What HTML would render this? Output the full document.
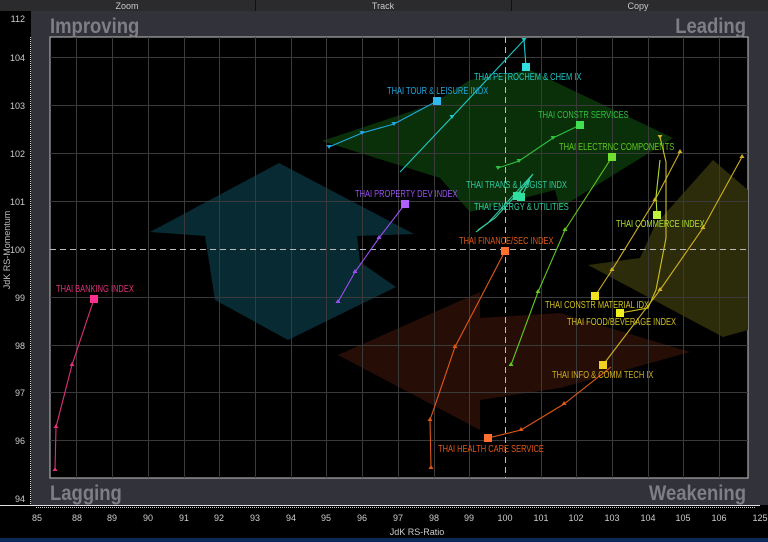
<!DOCTYPE html>
<html><head><meta charset="utf-8"><style>
html,body{margin:0;padding:0;background:#000;}
svg{display:block}
text{font-family:"Liberation Sans",sans-serif;}
</style></head><body>
<svg width="768" height="542" viewBox="0 0 768 542" xmlns="http://www.w3.org/2000/svg">
<rect width="768" height="542" fill="#000"/>
<rect x="0" y="0" width="768" height="11" fill="#2b2b2d"/>
<line x1="255.5" y1="0" x2="255.5" y2="11" stroke="#111"/>
<line x1="511.5" y1="0" x2="511.5" y2="11" stroke="#111"/>
<g fill="#c8c8c8" font-size="9" text-anchor="middle">
<text x="127" y="9">Zoom</text><text x="383" y="9">Track</text><text x="638" y="9">Copy</text>
</g>
<rect x="31" y="11" width="737" height="494" fill="#32323a"/>
<rect x="50" y="37" width="698" height="441" fill="#000" stroke="#aaa" stroke-width="1.2"/>
<g font-size="21" font-weight="bold" fill="#7e7e84">
<text transform="translate(50,33) scale(.88,1)">Improving</text>
<text transform="translate(746,33) scale(.88,1)" text-anchor="end">Leading</text>
<text transform="translate(50,500) scale(.88,1)">Lagging</text>
<text transform="translate(746,500) scale(.88,1)" text-anchor="end">Weakening</text>
</g>
<g>
<polygon points="150,232 279,163 414,234 357,236 360,262 396,287 288,340 215,300 205,236" fill="#0a3440" opacity="0.8"/>
<polygon points="322,141 430,105 470,80 530,70 673,138 560,208 555,190 470,212 440,178" fill="#0a350a" opacity="0.9"/>
<polygon points="588,265 640,258 655,225 713,160 748,190 748,330 723,337" fill="#2c2c0a"/>
<polygon points="338,355 480,292 480,318 560,313 690,352 560,388 480,400 480,430" fill="#260e06"/>
</g>
<g stroke="#3a3a3a" stroke-width="1">
<line x1="76.5" y1="37" x2="76.5" y2="478"/><line x1="112.5" y1="37" x2="112.5" y2="478"/><line x1="148.5" y1="37" x2="148.5" y2="478"/><line x1="184.5" y1="37" x2="184.5" y2="478"/><line x1="219.5" y1="37" x2="219.5" y2="478"/><line x1="255.5" y1="37" x2="255.5" y2="478"/><line x1="291.5" y1="37" x2="291.5" y2="478"/><line x1="326.5" y1="37" x2="326.5" y2="478"/><line x1="362.5" y1="37" x2="362.5" y2="478"/><line x1="398.5" y1="37" x2="398.5" y2="478"/><line x1="434.5" y1="37" x2="434.5" y2="478"/><line x1="469.5" y1="37" x2="469.5" y2="478"/><line x1="541.5" y1="37" x2="541.5" y2="478"/><line x1="576.5" y1="37" x2="576.5" y2="478"/><line x1="612.5" y1="37" x2="612.5" y2="478"/><line x1="648.5" y1="37" x2="648.5" y2="478"/><line x1="683.5" y1="37" x2="683.5" y2="478"/><line x1="719.5" y1="37" x2="719.5" y2="478"/>
<line x1="50" y1="57.5" x2="748" y2="57.5"/><line x1="50" y1="105.5" x2="748" y2="105.5"/><line x1="50" y1="153.5" x2="748" y2="153.5"/><line x1="50" y1="201.5" x2="748" y2="201.5"/><line x1="50" y1="297.5" x2="748" y2="297.5"/><line x1="50" y1="345.5" x2="748" y2="345.5"/><line x1="50" y1="392.5" x2="748" y2="392.5"/><line x1="50" y1="440.5" x2="748" y2="440.5"/>
</g>
<g stroke="#bbb" stroke-dasharray="6,4" stroke-width="1">
<line x1="505.5" y1="37" x2="505.5" y2="478"/>
<line x1="50" y1="249.5" x2="748" y2="249.5"/>
</g>
<g fill="none" stroke-width="1.1">
<polyline points="55,470 56,427 72,365 94,299" stroke="#e0307a"/>
<polyline points="338,302 355,272 379,238 405,204" stroke="#9a50f0"/>
<polyline points="329,147 362,133 394,124 437,101" stroke="#20a8e0"/>
<polyline points="400,172 452,117 524,40 526,67" stroke="#20c8c8"/>
<polyline points="498,168 519,161 553,138 580,125" stroke="#30c040"/>
<polyline points="511,365 538,292 565,230 612,157" stroke="#60c820"/>
<polyline points="476,232 488,223 533,174 517,196" stroke="#30c8a0"/>
<polyline points="478,230 495,218 530,180 521,197" stroke="#30d0a0"/>
<polyline points="431,468 430,420 455,347 505,251" stroke="#e05818"/>
<polyline points="488,438 521,430 564,404 611,367" stroke="#e05818"/>
<polyline points="603,365 660,290 703,228 742,157" stroke="#d0b020"/>
<polyline points="595,296 612,270 655,200 680,152" stroke="#d0b020"/>
<polyline points="620,313 648,308 656,290 666,238 666,162 660,137" stroke="#d0c020"/>
<polyline points="657,215 656,197 660,160" stroke="#b0e030"/>
</g>
<g>
<path d="M55,467l-2.5,4h5z M56,424l-2.5,4h5z M72,362l-2.5,4h5z" fill="#e0307a"/>
<path d="M338,299l-2.5,4h5z M355,269l-2.5,4h5z M379,235l-2.5,4h5z" fill="#9a50f0"/>
<path d="M329,149l-2.5,-4h5z M362,135l-2.5,-4h5z M394,126l-2.5,-4h5z" fill="#20a8e0"/>
<path d="M524,42l-2.5,-4h5z M452,119l-2.5,-4h5z" fill="#20c8c8"/>
<path d="M498,170l-2.5,-4h5z M519,163l-2.5,-4h5z M553,140l-2.5,-4h5z" fill="#30c040"/>
<path d="M511,362l-2.5,4h5z M538,289l-2.5,4h5z M565,227l-2.5,4h5z" fill="#60c820"/>
<path d="M431,465l-2.5,4h5z M430,417l-2.5,4h5z M455,344l-2.5,4h5z M521,427l-2.5,4h5z M564,401l-2.5,4h5z" fill="#e05818"/>
<path d="M660,287l-2.5,4h5z M703,225l-2.5,4h5z M742,154l-2.5,4h5z M612,267l-2.5,4h5z M655,197l-2.5,4h5z M680,149l-2.5,4h5z M660,139l-2.5,-4h5z" fill="#d0b020"/>
</g>
<g>
<rect x="90" y="295" width="8" height="8" fill="#ff3090"/>
<rect x="401" y="200" width="8" height="8" fill="#b060ff"/>
<rect x="433" y="97" width="8" height="8" fill="#30b8f0"/>
<rect x="522" y="63" width="8" height="8" fill="#30e0e0"/>
<rect x="576" y="121" width="8" height="8" fill="#40e050"/>
<rect x="608" y="153" width="8" height="8" fill="#70e030"/>
<rect x="513" y="192" width="8" height="8" fill="#30e0a0"/>
<rect x="517" y="193" width="8" height="8" fill="#30e0a0"/>
<rect x="501" y="247" width="8" height="8" fill="#ff7030"/>
<rect x="484" y="434" width="8" height="8" fill="#ff7030"/>
<rect x="599" y="361" width="8" height="8" fill="#f0d020"/>
<rect x="591" y="292" width="8" height="8" fill="#f0e020"/>
<rect x="616" y="309" width="8" height="8" fill="#f0f020"/>
<rect x="653" y="211" width="8" height="8" fill="#c0f040"/>
</g>
<g font-size="10">
<text transform="translate(56,292) scale(.75,1)" fill="#e0307a">THAI BANKING INDEX</text>
<text transform="translate(355,197) scale(.75,1)" fill="#9a50f0">THAI PROPERTY DEV INDEX</text>
<text transform="translate(387,94) scale(.75,1)" fill="#20a8e0">THAI TOUR &amp; LEISURE INDX</text>
<text transform="translate(474,80) scale(.75,1)" fill="#20c8c8">THAI PETROCHEM &amp; CHEM IX</text>
<text transform="translate(538,118) scale(.75,1)" fill="#30c040">THAI CONSTR SERVICES</text>
<text transform="translate(559,150) scale(.75,1)" fill="#60c820">THAI ELECTRNC COMPONENTS</text>
<text transform="translate(466,188) scale(.75,1)" fill="#30c8a0">THAI TRANS &amp; LOGIST INDX</text>
<text transform="translate(474,210) scale(.75,1)" fill="#30d0a0">THAI ENERGY &amp; UTILITIES</text>
<text transform="translate(459,244) scale(.75,1)" fill="#e05818">THAI FINANCE/SEC INDEX</text>
<text transform="translate(616,227) scale(.75,1)" fill="#b0e030">THAI COMMERCE INDEX</text>
<text transform="translate(545,308) scale(.75,1)" fill="#d0c020">THAI CONSTR MATERIAL IDX</text>
<text transform="translate(567,325) scale(.75,1)" fill="#d0c020">THAI FOOD/BEVERAGE INDEX</text>
<text transform="translate(552,378) scale(.75,1)" fill="#d0b020">THAI INFO &amp; COMM TECH IX</text>
<text transform="translate(438,452) scale(.75,1)" fill="#e05818">THAI HEALTH CARE SERVICE</text>
</g>
<line x1="30.5" y1="37" x2="30.5" y2="505" stroke="#ddd" stroke-dasharray="1,1"/>
<g font-size="9" fill="#ccc" text-anchor="end">
<text x="25" y="22">112</text><text x="25" y="61">104</text><text x="25" y="109">103</text><text x="25" y="157">102</text><text x="25" y="205">101</text><text x="25" y="253">100</text><text x="25" y="301">99</text><text x="25" y="349">98</text><text x="25" y="396">97</text><text x="25" y="444">96</text><text x="25" y="502">94</text>
</g>
<text transform="translate(10,250) rotate(-90)" font-size="9" fill="#bbb" text-anchor="middle">JdK RS-Momentum</text>
<line x1="0" y1="505.5" x2="760" y2="505.5" stroke="#ddd"/>
<line x1="36" y1="507.5" x2="755" y2="507.5" stroke="#ccc" stroke-dasharray="1,1"/>
<g font-size="9" fill="#ccc" text-anchor="middle">
<text x="37" y="521">85</text><text x="77" y="521">88</text><text x="112" y="521">89</text><text x="148" y="521">90</text><text x="184" y="521">91</text><text x="219" y="521">92</text><text x="255" y="521">93</text><text x="291" y="521">94</text><text x="326" y="521">95</text><text x="362" y="521">96</text><text x="398" y="521">97</text><text x="434" y="521">98</text><text x="469" y="521">99</text><text x="505" y="521">100</text><text x="541" y="521">101</text><text x="576" y="521">102</text><text x="612" y="521">103</text><text x="648" y="521">104</text><text x="683" y="521">105</text><text x="719" y="521">106</text><text x="760" y="521">125</text>
<text x="417" y="535">JdK RS-Ratio</text>
</g>
<rect x="0" y="538" width="768" height="4" fill="#0c2a58"/>
</svg>
</body></html>
